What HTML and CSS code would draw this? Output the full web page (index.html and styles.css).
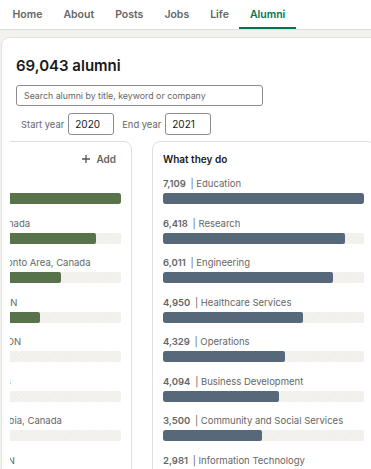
FILE: index.html
```html
<!DOCTYPE html>
<html lang="en">
<head>
<meta charset="utf-8">
<title>Alumni</title>
<link rel="stylesheet" href="styles.css">
</head>
<body>
<nav class="tabs">
  <a class="tab">Home</a>
  <a class="tab">About</a>
  <a class="tab">Posts</a>
  <a class="tab">Jobs</a>
  <a class="tab">Life</a>
  <a class="tab active">Alumni</a>
</nav>
<main class="panel">
  <div class="intro">
    <h1 class="title">69,043 alumni</h1>
    <div class="search">Search alumni by title, keyword or company</div>
    <div class="years">
      <span class="year-label">Start year</span>
      <span class="year-input start">2020</span>
      <span class="year-label">End year</span>
      <span class="year-input">2021</span>
    </div>
  </div>
  <div class="carousel">
    <div class="track">
      <section class="insight live">
        <header class="insight-head">
          <h2 class="insight-title">Where they live</h2>
          <button class="add"><svg class="plus" viewBox="0 0 8 8" width="8" height="8"><path d="M4 0v8M0 4h8" stroke="#555" stroke-width="1.3"/></svg>Add</button>
        </header>
        <ul class="rows">
          <li class="row"><div class="label"><b>10,683</b> | Canada</div><div class="bar"><div class="fill" style="width:100%"></div></div></li>
          <li class="row"><div class="label"><b>9,356</b> | Ontario, Canada</div><div class="bar"><div class="fill" style="width:87.6%"></div></div></li>
          <li class="row"><div class="label"><b>7,489</b> | Greater Toronto Area, Canada</div><div class="bar"><div class="fill" style="width:70.1%"></div></div></li>
          <li class="row"><div class="label"><b>6,390</b> | Waterloo, ON</div><div class="bar"><div class="fill" style="width:59.8%"></div></div></li>
          <li class="row"><div class="label"><b>4,612</b> | Burlington, ON</div><div class="bar"><div class="fill" style="width:9.8%"></div></div></li>
          <li class="row"><div class="label"><b>2,111</b> | United States</div><div class="bar"><div class="fill" style="width:6.2%"></div></div></li>
          <li class="row"><div class="label"><b>1,111</b> | British Columbia, Canada</div><div class="bar"><div class="fill" style="width:4.8%"></div></div></li>
          <li class="row"><div class="label"><b>1,011</b> | Brampton, ON</div><div class="bar"><div class="fill" style="width:4.2%"></div></div></li>
        </ul>
      </section>
      <section class="insight do">
        <header class="insight-head">
          <h2 class="insight-title">What they do</h2>
        </header>
        <ul class="rows">
          <li class="row"><div class="label"><b>7,109</b> | Education</div><div class="bar"><div class="fill" style="width:100%"></div></div></li>
          <li class="row"><div class="label"><b>6,418</b> | Research</div><div class="bar"><div class="fill" style="width:90.3%"></div></div></li>
          <li class="row"><div class="label"><b>6,011</b> | Engineering</div><div class="bar"><div class="fill" style="width:84.6%"></div></div></li>
          <li class="row"><div class="label"><b>4,950</b> | Healthcare Services</div><div class="bar"><div class="fill" style="width:69.6%"></div></div></li>
          <li class="row"><div class="label"><b>4,329</b> | Operations</div><div class="bar"><div class="fill" style="width:60.9%"></div></div></li>
          <li class="row"><div class="label"><b>4,094</b> | Business Development</div><div class="bar"><div class="fill" style="width:57.6%"></div></div></li>
          <li class="row"><div class="label"><b>3,500</b> | Community and Social Services</div><div class="bar"><div class="fill" style="width:49.2%"></div></div></li>
          <li class="row"><div class="label"><b>2,981</b> | Information Technology</div><div class="bar"><div class="fill" style="width:41.9%"></div></div></li>
        </ul>
      </section>
    </div>
  </div>
</main>
</body>
</html>
```
FILE: styles.css
```css
* { box-sizing: border-box; }
html, body { margin: 0; padding: 0; }
body {
  background: #f4f2ee;
  font-family: "Inter", "Noto Sans", sans-serif;
  color: #191919;
  width: 371px;
  height: 469px;
  overflow: hidden;
}
.tabs {
  display: flex;
  height: 29px;
  background: #fff;
  padding-left: 2px;
  box-shadow: 0 1px 1px rgba(0,0,0,0.08);
  position: relative;
  z-index: 1;
}
.tab {
  display: flex;
  align-items: center;
  padding: 0 10.5px;
  padding-top: 2px;
  font-size: 10.5px;
  font-weight: 600;
  color: #666;
  border-bottom: 2px solid transparent;
}
.tab.active {
  color: #01754f;
  border-bottom-color: #01754f;
}
.panel {
  margin: 9px 0 0 2px;
  width: 380px;
  height: 440px;
  background: #fff;
  border-radius: 8px 0 0 0;
  box-shadow: 0 0 0 1px rgba(140,140,140,0.15);
  padding-top: 16px;
}
.intro { padding-left: 14px; }
.title {
  margin: 0;
  font-size: 15px;
  line-height: 24px;
  font-weight: 600;
  color: #191919;
}
.search {
  margin-top: 7px;
  width: 247px;
  height: 21px;
  border: 1px solid #8c8c8c;
  border-radius: 3px;
  font-size: 8.8px;
  color: #666;
  line-height: 19px;
  padding-left: 7px;
}
.years {
  display: flex;
  align-items: center;
  margin-top: 7px;
  padding-left: 5px;
  height: 22px;
}
.year-label {
  font-size: 9.4px;
  color: #666;
  margin-right: 4px;
}
.year-input {
  width: 46px;
  height: 22px;
  border: 1px solid #8c8c8c;
  border-radius: 3px;
  font-size: 10px;
  line-height: 20px;
  padding-left: 6px;
  color: #191919;
}
.year-input.start { margin-right: 8px; }
.carousel {
  margin-top: 6px;
  margin-left: 8px;
  overflow: hidden;
}
.track {
  display: flex;
  gap: 20px;
  margin-left: -101px;
}
.insight {
  flex-shrink: 0;
  width: 223px;
  height: 360px;
  border: 1px solid #e0dfdc;
  border-radius: 8px;
  padding: 10px 10px 0;
}
.insight-head {
  display: flex;
  justify-content: space-between;
  align-items: center;
  height: 14px;
}
.insight-title {
  margin: 0;
  font-size: 10px;
  font-weight: 600;
  color: #191919;
}
.add {
  display: flex;
  align-items: center;
  gap: 6px;
  border: 0;
  background: none;
  padding: 0 5px 0 0;
  font-family: inherit;
  font-size: 10px;
  font-weight: 600;
  color: #666;
}
.rows {
  list-style: none;
  margin: 11px 0 0;
  padding: 0;
}
.row { margin-bottom: 12.5px; }
.label {
  font-size: 9.5px;
  line-height: 14px;
  color: #666;
  white-space: nowrap;
}
.label b { font-weight: 600; margin-right: 2px; }
.bar {
  margin-top: 2px;
  height: 11px;
  border-radius: 2px;
  background: #f3f2ef repeating-linear-gradient(135deg, rgba(0,0,0,0.015) 0 1px, transparent 1px 3px);
  overflow: hidden;
}
.fill { height: 100%; border-radius: 2px; }
.live .fill { background: #58724c; }
.do .fill { background: #56687a; }
```
